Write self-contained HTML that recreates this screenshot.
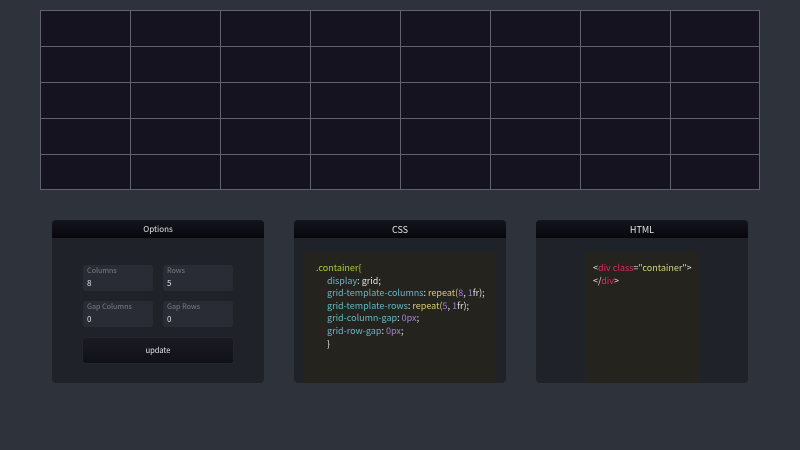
<!DOCTYPE html>
<html><head><meta charset="utf-8"><style>
*{box-sizing:border-box;margin:0;padding:0}
html,body{width:800px;height:450px;overflow:hidden;background:#2e333b;font-family:"Noto Sans CJK JP","Liberation Sans",sans-serif}
.a{position:absolute}
#grid{left:40px;top:10px;width:720px;height:180px;background:#14131f;border:1px solid #62626f}
.v{position:absolute;top:0;bottom:0;width:1px;background:#62626f}
.h{position:absolute;left:0;right:0;height:1px;background:#62626f}
.p{position:absolute;top:220px;width:212px;height:163px;background:#1f2229;border-radius:4px;overflow:hidden}
.t{height:18px;background:linear-gradient(#14141d,#07070c);color:#e6e6ea;font-size:9px;line-height:20px;text-align:center}
.f{position:absolute;width:70px;height:26px;background:#292c35;border-radius:3px;line-height:12px;padding-left:4px}
.f b{display:block;font-weight:400;font-size:7.2px;color:#7c7e86;height:12px}
.f i{display:block;font-style:normal;font-size:8px;color:#e4e4e8;margin-top:1px}
.code{position:absolute;background:#24231d;font-size:9px;line-height:12.6px;white-space:pre;color:#e4e4e0}
.code div{padding-left:11px}
.g{color:#a8cc40}.c{color:#66b8c8}.y{color:#dccc7c}.u{color:#a080e0}.r{color:#d82c64}.s{color:#d4d48c}
</style></head><body>
<div class="a" id="grid">
<div class="v" style="left:89px"></div><div class="v" style="left:179px"></div><div class="v" style="left:269px"></div><div class="v" style="left:359px"></div><div class="v" style="left:449px"></div><div class="v" style="left:539px"></div><div class="v" style="left:629px"></div>
<div class="h" style="top:35px"></div><div class="h" style="top:71px"></div><div class="h" style="top:107px"></div><div class="h" style="top:143px"></div>
</div>

<div class="p" style="left:52px">
<div class="t" style="font-size:8px">Options</div>
<div class="f" style="left:31px;top:45px"><b>Columns</b><i>8</i></div>
<div class="f" style="left:111px;top:45px"><b>Rows</b><i>5</i></div>
<div class="f" style="left:31px;top:81px"><b>Gap Columns</b><i>0</i></div>
<div class="f" style="left:111px;top:81px"><b>Gap Rows</b><i>0</i></div>
<div class="a" style="left:31px;top:118px;width:150px;height:25px;background:linear-gradient(#1b1b24,#101017);border-radius:3px;box-shadow:0 0 2px #2c2e38;color:#e8e8ec;font-size:7.5px;line-height:25px;text-align:center">update</div>
</div>

<div class="p" style="left:294px">
<div class="t">CSS</div>
<div class="code" style="left:10px;top:32px;width:192px;height:131px;padding:10px 0 0 12px"><span class="g">.container{</span>
<div><span class="c">display</span>: grid;</div><div><span class="c">grid-template-columns</span>: <span class="y">repeat(</span><span class="u">8</span>, <span class="u">1</span>fr);</div><div><span class="c">grid-template-rows</span>: <span class="y">repeat(</span><span class="u">5</span>, <span class="u">1</span>fr);</div><div><span class="c">grid-column-gap</span>: <span class="u">0px</span>;</div><div><span class="c">grid-row-gap</span>: <span class="u">0px</span>;</div><div>}</div></div>
</div>

<div class="p" style="left:536px">
<div class="t">HTML</div>
<div class="code" style="left:49px;top:32px;width:115px;height:131px;padding:10px 0 0 8px">&lt;<span class="r">div class</span>=<span class="s">"container"</span>&gt;
&lt;/<span class="r">div</span>&gt;</div>
</div>
</body></html>
